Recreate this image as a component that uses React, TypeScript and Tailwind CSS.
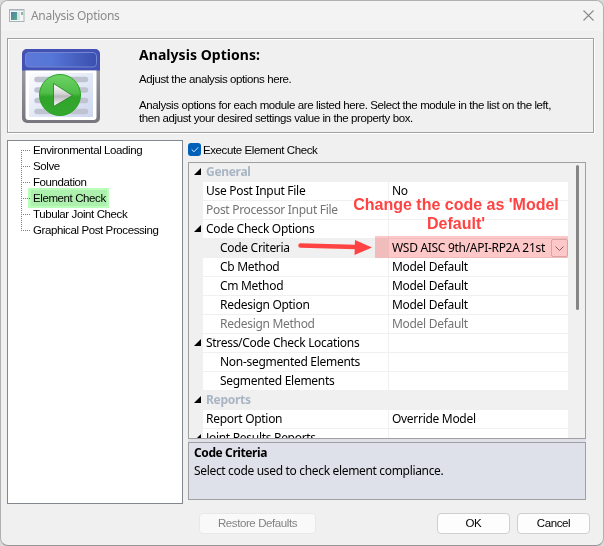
import React from "react";

const uiFont = "font-['Liberation_Sans',sans-serif]";
const gridFont = "font-['Noto_Sans',sans-serif]";

const modules = [
  "Environmental Loading",
  "Solve",
  "Foundation",
  "Element Check",
  "Tubular Joint Check",
  "Graphical Post Processing",
];

type Row = {
  label: string;
  value?: string;
  kind?: "section" | "group" | "child";
  muted?: boolean;
  active?: boolean;
};

const rows: Row[] = [
  { label: "General", kind: "section" },
  { label: "Use Post Input File", value: "No" },
  { label: "Post Processor Input File", muted: true },
  { label: "Code Check Options", kind: "group" },
  { label: "Code Criteria", value: "WSD AISC 9th/API-RP2A 21st", kind: "child", active: true },
  { label: "Cb Method", value: "Model Default", kind: "child" },
  { label: "Cm Method", value: "Model Default", kind: "child" },
  { label: "Redesign Option", value: "Model Default", kind: "child" },
  { label: "Redesign Method", value: "Model Default", kind: "child", muted: true },
  { label: "Stress/Code Check Locations", kind: "group" },
  { label: "Non-segmented Elements", kind: "child" },
  { label: "Segmented Elements", kind: "child" },
  { label: "Reports", kind: "section" },
  { label: "Report Option", value: "Override Model" },
  { label: "Joint Results Reports", kind: "group" },
];

function AppIcon() {
  return (
    <svg className="mb-[2px] h-[13px] w-[16px]" viewBox="0 0 16 13">
      <defs>
        <linearGradient id="mini" x1="0" y1="0" x2="1" y2="1">
          <stop offset="0" stopColor="#4c7fae" />
          <stop offset="1" stopColor="#5cab82" />
        </linearGradient>
      </defs>
      <rect x=".5" y=".5" width="14.500" height="12" fill="#f4f7f8" stroke="#a9b3b8" />
      <path d="M1 1.5h14" stroke="#c8d3db" />
      <rect x="2" y="3" width="6" height="8" fill="url(#mini)" />
      <rect x="8" y="3" width="3" height="8" fill="#d9e4e6" />
      <rect x="12" y="3" width="2" height="3" fill="#8db6a5" />
    </svg>
  );
}

function RunIcon() {
  return (
    <svg className="h-[76px] w-[80px]" viewBox="0 0 80 76">
      <defs>
        <linearGradient id="frame" x1="0" y1="0" x2="0" y2="1">
          <stop offset="0" stopColor="#a6a5ad" />
          <stop offset="1" stopColor="#77757d" />
        </linearGradient>
        <linearGradient id="bar" x1="0" y1="0" x2="1" y2="0">
          <stop offset="0" stopColor="#5c78d8" />
          <stop offset=".35" stopColor="#5677d8" />
          <stop offset="1" stopColor="#3b4fae" />
        </linearGradient>
        <linearGradient id="page" x1="0" y1="0" x2="1" y2="1">
          <stop offset="0" stopColor="#fbfcff" />
          <stop offset="1" stopColor="#cdd6ef" />
        </linearGradient>
        <linearGradient id="ball" x1="0" y1="0" x2="0" y2="1">
          <stop offset="0" stopColor="#6fd467" />
          <stop offset=".45" stopColor="#4fbd48" />
          <stop offset=".55" stopColor="#2fa52a" />
          <stop offset="1" stopColor="#35a82f" />
        </linearGradient>
        <linearGradient id="play" x1="0" y1="0" x2="0" y2="1">
          <stop offset="0" stopColor="#ffffff" />
          <stop offset=".45" stopColor="#d5d5d5" />
          <stop offset=".55" stopColor="#b9b9b9" />
          <stop offset="1" stopColor="#fafafa" />
        </linearGradient>
      </defs>
      <rect x="1" y="1" width="78" height="74" rx="5" fill="url(#frame)" />
      <path d="M1 22.500V6a5 5 0 0 1 5-5h68a5 5 0 0 1 5 5v16.500z" fill="#4350b4" />
      <rect x="4.500" y="4.500" width="71" height="14.500" rx="3.500" fill="url(#bar)" stroke="#7286d2" />
      <path d="M4.500 22.500h71V69a3 3 0 0 1-3 3h-65a3 3 0 0 1-3-3z" fill="#fff" />
      <path d="M8 25h64v44H8z" fill="url(#page)" />
      {[31.5, 42, 52.5, 63.5].map((y) => (
        <path key={y} d={`M16 ${y}h48.500`} stroke="#bfc3cf" strokeWidth="5.500" strokeLinecap="round" />
      ))}
      <circle cx="39" cy="47" r="20.500" fill="url(#ball)" stroke="#27a522" />
      <path d="M32.500 35.500L51.500 47.500 32.500 58.500z" fill="url(#play)" stroke="#237b20" strokeWidth=".8" />
    </svg>
  );
}

function GridRow({ row }: { row: Row }) {
  const section = row.kind === "section";
  const tone = section ? "text-[#a9b5c4] font-bold" : row.muted ? "text-[#747474]" : "text-black";
  const surface = section ? "bg-[#f0f0f0]" : "bg-white";
  return (
    <div className="flex h-[19px] shrink-0">
      <div className="flex w-[14px] shrink-0 items-center justify-center">
        {(section || row.kind === "group") && (
          <svg className="mb-[2px] ml-[2px] h-[7px] w-[7px]" viewBox="0 0 7 7">
            <path d="M7 0v7H0z" />
          </svg>
        )}
      </div>
      <div className={`flex w-[365px] border-b border-[#f0f0f0] leading-[18px] ${surface} ${tone}`}>
        <div
          className={`w-[185px] ${row.kind === "child" ? "pl-[17px]" : "pl-[3px]"} ${row.active ? "bg-[#f0f0f0]" : ""}`}
        >
          {row.label}
        </div>
        <div className={`flex-1 pl-[3px] ${section ? "" : "border-l border-[#f0f0f0]"}`}>{row.value}</div>
      </div>
    </div>
  );
}

function Button({ label, className }: { label: string; className: string }) {
  return (
    <button className={`flex h-[21px] items-center justify-center rounded-[4px] border ${className}`}>{label}</button>
  );
}

export default function App() {
  return (
    <div
      className={`relative h-[546px] w-[604px] overflow-hidden bg-[#d9d9d9] text-[11.5px] tracking-[-0.4px] text-black ${uiFont}`}
    >
      <div className="flex h-[546px] w-[604px] flex-col overflow-hidden rounded-[8px] border border-[#b0b0b0] border-b-[#969696] bg-[#f0f0f0]">
        <header className="flex h-[30px] shrink-0 items-center bg-[#f3f3f3] pl-[8px] pr-[9px]">
          <AppIcon />
          <span className={`ml-[6px] text-[12px] tracking-[-0.3px] text-[#8b8b8b] ${gridFont}`}>Analysis Options</span>
          <svg className="mb-[2px] ml-auto h-[11px] w-[11px]" viewBox="0 0 11 11">
            <path d="M.5.5l10 10M10.500.5l-10 10" stroke="#8a8a8a" strokeWidth="1.100" />
          </svg>
        </header>

        <section className="ml-[6px] mt-[7px] flex h-[95px] w-[587px] shrink-0 border border-[#a0a0a0] shadow-[1px_1px_0_#fff,inset_1px_1px_0_#fff]">
          <div className="ml-[13px] mt-[9px] shrink-0">
            <RunIcon />
          </div>
          <div className="ml-[38px] pt-[6px]">
            <h1 className={`text-[14px] font-bold leading-[19px] tracking-[0.05px] ${gridFont}`}>Analysis Options:</h1>
            <p className="mt-[9px] leading-[13px]">Adjust the analysis options here.</p>
            <p className="mt-[13px] whitespace-nowrap leading-[13px]">
              Analysis options for each module are listed here. Select the module in the list on the left,
              <br />
              then adjust your desired settings value in the property box.
            </p>
          </div>
        </section>

        <div className="ml-[6px] mt-[7px] flex">
          <nav className="h-[364px] w-[176px] shrink-0 border border-[#828790] bg-white pl-[13px] pt-[1px]">
            {modules.map((name, i) => (
              <div key={name} className="flex h-[16px] whitespace-nowrap leading-[16px]">
                <svg className="mr-[3px] h-[16px] w-[9px] shrink-0" viewBox="0 0 9 16">
                  <path
                    d={i === 0 ? "M.5 8v8" : i === modules.length - 1 ? "M.5 0v8" : "M.5 0v16"}
                    stroke="#808080"
                    strokeDasharray="1 1"
                  />
                  <path d="M0 8.500h9" stroke="#808080" strokeDasharray="1 1" />
                </svg>
                <span>{name}</span>
              </div>
            ))}
          </nav>

          <main className="ml-[5px] w-[398px]">
            <label className="flex h-[22px] items-start pt-[3px]">
              <span className="flex h-[13px] w-[13px] items-center justify-center rounded-[3px] bg-[#005fb8]">
                <svg className="h-[7px] w-[8px]" viewBox="0 0 8 7">
                  <path d="M.7 3.500L3 5.800 7.300 1.300" fill="none" stroke="#d8ebfb" />
                </svg>
              </span>
              <span className="ml-[2px] leading-[14px]">Execute Element Check</span>
            </label>

            <div className={`flex h-[277px] overflow-hidden border border-[#a0a0a0] bg-[#f0f0f0] text-[12px] ${gridFont}`}>
              <div className="flex w-[379px] flex-col whitespace-nowrap tracking-[-0.3px]">
                {rows.map((row) => (
                  <GridRow key={row.label} row={row} />
                ))}
              </div>
              <div className="ml-[8px] mt-[2px] h-[145px] w-[3px] rounded-full bg-[#858585]" />
            </div>
            <div className="h-[3px] bg-[#dee1e9]" />
            <div
              className={`h-[58px] border border-[#a0a0a0] bg-[#dee1e9] pl-[5px] pt-[1px] text-[12px] leading-[18px] ${gridFont}`}
            >
              <p className="font-bold tracking-[-0.4px]">Code Criteria</p>
              <p className="tracking-[-0.33px]">Select code used to check element compliance.</p>
            </div>
          </main>
        </div>

        <footer className="mt-[9px] flex pl-[198px]">
          <Button label="Restore Defaults" className="w-[117px] border-[#e8e8e8] bg-[#f9f9f9] text-[#838383]" />
          <Button label="OK" className="ml-[121px] w-[73px] border-[#cfcfcf] bg-[#fdfdfd]" />
          <Button label="Cancel" className="ml-[7px] w-[73px] border-[#cfcfcf] bg-[#fdfdfd]" />
        </footer>
      </div>

      {/* Annotation marks drawn over the dialog */}
      <div className="absolute left-[28px] top-[188px] h-[20px] w-[81px] bg-[#b9ffb9] mix-blend-multiply" />
      <div className="absolute left-[31px] top-[190px] h-[16px] w-[76px] bg-[#f0f0f0] mix-blend-multiply" />
      <div className="absolute left-[375px] top-[236px] h-[22px] w-[193px] bg-[#ffc8c8] mix-blend-multiply" />
      <div className="absolute left-[551px] top-[239px] flex h-[18px] w-[17px] items-center justify-center rounded-[2px] border border-[#dca3a3]">
        <svg className="h-[5px] w-[9px]" viewBox="0 0 9 5">
          <path d="M.5.5l4 4 4-4" fill="none" stroke="#8b5a5a" />
        </svg>
      </div>
      <svg className="absolute left-[298px] top-[238px] h-[18px] w-[75px]" viewBox="0 0 75 18">
        <path d="M2.500 7.500L58 9" stroke="#ff4242" strokeWidth="4.500" strokeLinecap="round" />
        <path d="M57 2l17 7.500L56.500 17z" fill="#ff4242" />
      </svg>
      <div className="absolute left-[341px] top-[195px] w-[230px] text-center text-[16px] font-bold leading-[19px] tracking-normal text-[#ff4242]">
        Change the code as 'Model
        <br />
        Default'
      </div>
    </div>
  );
}
